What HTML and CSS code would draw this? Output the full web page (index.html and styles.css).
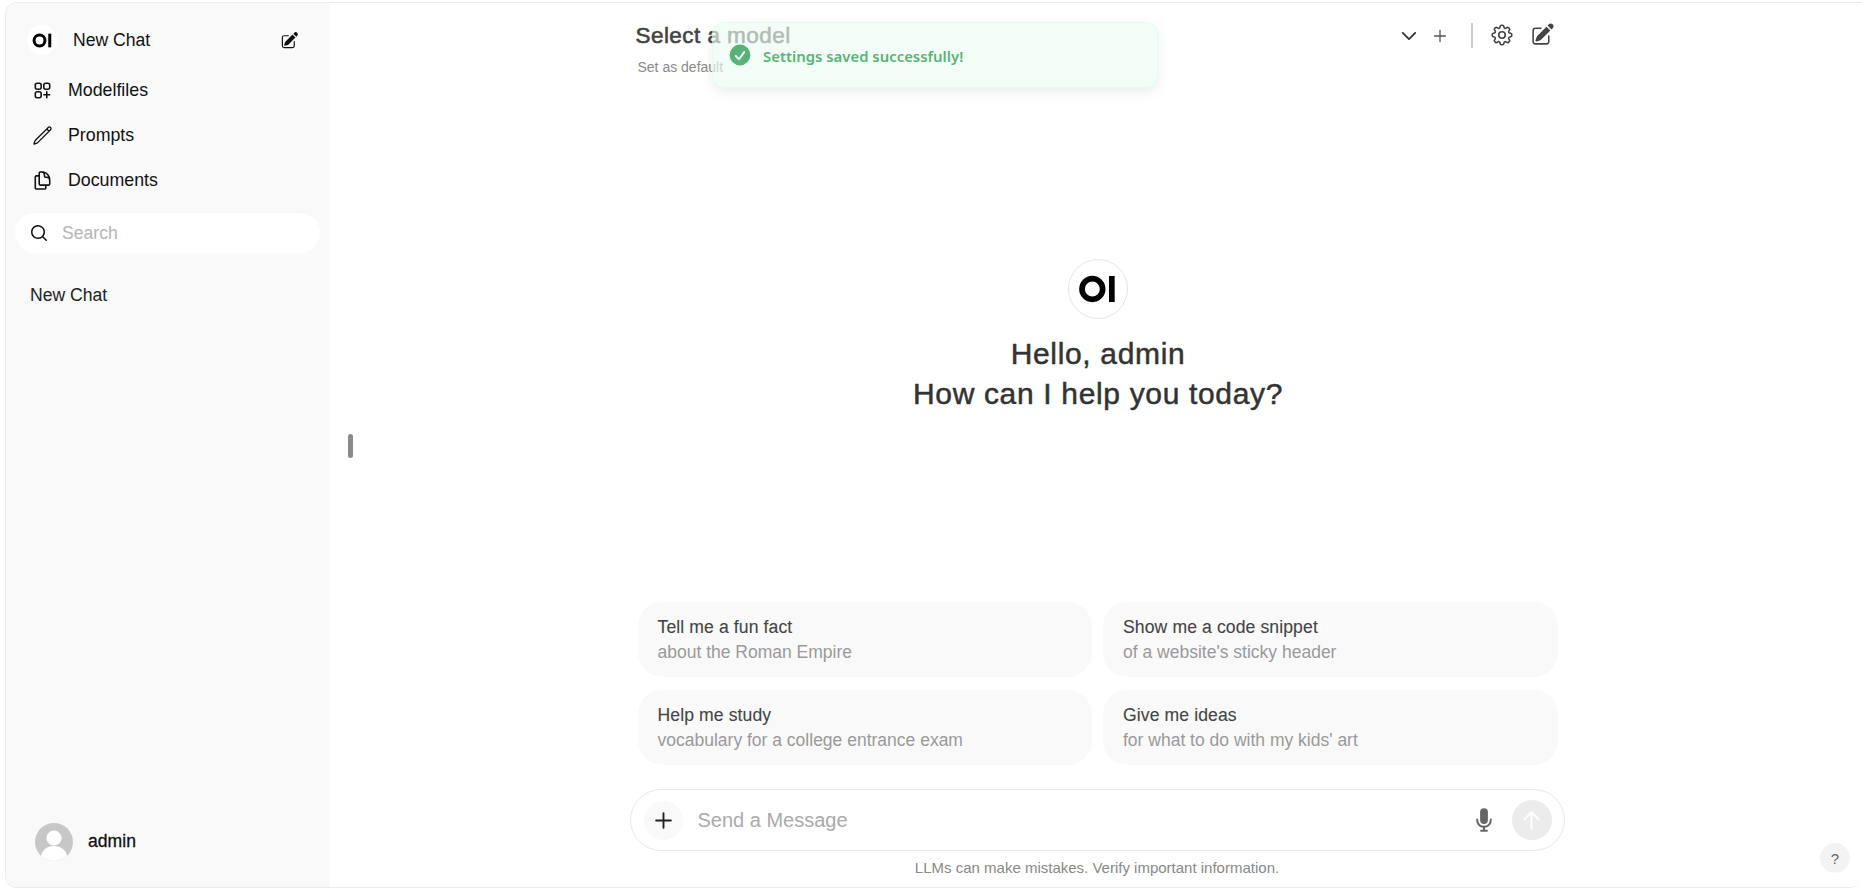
FILE: index.html
```html
<!DOCTYPE html>
<html lang="en">
<head>
<meta charset="utf-8">
<title>Open WebUI</title>
<link rel="stylesheet" href="styles.css">
</head>
<body>
<div class="frame">
  <aside class="sidebar">
    <div class="new-chat">
      <span class="logo-small">
        <svg viewBox="0 0 24 24" width="21" height="21"><circle cx="8.6" cy="12" r="6.2" fill="none" stroke="#000" stroke-width="3.4"/><rect x="18.6" y="4.2" width="3.4" height="15.6" fill="#000"/></svg>
      </span>
      <span class="new-chat-label">New Chat</span>
      <svg class="new-chat-icon" viewBox="0 0 24 24" fill="#111"><path d="M21.731 2.269a2.625 2.625 0 0 0-3.712 0l-1.157 1.157 3.712 3.712 1.157-1.157a2.625 2.625 0 0 0 0-3.712ZM19.513 8.199l-3.712-3.712-8.4 8.4a5.25 5.25 0 0 0-1.32 2.214l-.8 2.685a.75.75 0 0 0 .933.933l2.685-.8a5.25 5.25 0 0 0 2.214-1.32l8.4-8.4Z"/><path d="M5.25 5.25a3 3 0 0 0-3 3v10.5a3 3 0 0 0 3 3h10.5a3 3 0 0 0 3-3V13.5a.75.75 0 0 0-1.5 0v5.25a1.5 1.5 0 0 1-1.5 1.5H5.25a1.5 1.5 0 0 1-1.5-1.5V8.25a1.5 1.5 0 0 1 1.5-1.5h5.25a.75.75 0 0 0 0-1.5H5.25Z"/></svg>
    </div>
    <nav class="nav">
      <a class="nav-item">
        <svg class="nav-icon" viewBox="0 0 24 24" fill="none" stroke="#111" stroke-width="1.8" stroke-linecap="round" stroke-linejoin="round"><path d="M13.5 16.875h3.375m0 0h3.375m-3.375 0V13.5m0 3.375v3.375M6 10.5h2.25a2.25 2.25 0 0 0 2.25-2.25V6a2.25 2.25 0 0 0-2.25-2.25H6A2.25 2.25 0 0 0 3.75 6v2.25A2.25 2.25 0 0 0 6 10.5Zm0 9.75h2.25A2.25 2.25 0 0 0 10.5 18v-2.25a2.25 2.25 0 0 0-2.25-2.25H6a2.25 2.25 0 0 0-2.25 2.25V18A2.25 2.25 0 0 0 6 20.25Zm9.75-9.75H18a2.25 2.25 0 0 0 2.25-2.25V6A2.25 2.25 0 0 0 18 3.75h-2.25A2.25 2.25 0 0 0 13.5 6v2.25a2.25 2.25 0 0 0 2.25 2.25Z"/></svg>
        <span>Modelfiles</span>
      </a>
      <a class="nav-item">
        <svg class="nav-icon" viewBox="0 0 24 24" fill="none" stroke="#111" stroke-width="1.5" stroke-linecap="round" stroke-linejoin="round"><path d="m16.862 4.487 1.687-1.688a1.875 1.875 0 1 1 2.652 2.652L6.832 19.82a4.5 4.5 0 0 1-1.897 1.13l-2.685.8.8-2.685a4.5 4.5 0 0 1 1.13-1.897L16.863 4.487Zm0 0L19.5 7.125"/></svg>
        <span>Prompts</span>
      </a>
      <a class="nav-item">
        <svg class="nav-icon" viewBox="0 0 24 24" fill="none" stroke="#111" stroke-width="1.8" stroke-linecap="round" stroke-linejoin="round"><path d="M15.75 17.25v3.375c0 .621-.504 1.125-1.125 1.125h-9.75a1.125 1.125 0 0 1-1.125-1.125V7.875c0-.621.504-1.125 1.125-1.125H6.75a9.06 9.06 0 0 1 1.5.124m7.5 10.376h3.375c.621 0 1.125-.504 1.125-1.125V11.25c0-4.46-3.243-8.161-7.5-8.876a9.06 9.06 0 0 0-1.5-.124H9.375c-.621 0-1.125.504-1.125 1.125v3.5m7.5 10.375H9.375a1.125 1.125 0 0 1-1.125-1.125v-9.25m12 6.625v-1.875a3.375 3.375 0 0 0-3.375-3.375h-1.5a1.125 1.125 0 0 1-1.125-1.125v-1.5a3.375 3.375 0 0 0-3.375-3.375H9.75"/></svg>
        <span>Documents</span>
      </a>
    </nav>
    <div class="search">
      <svg class="search-icon" viewBox="0 0 20 20" fill="#111"><path fill-rule="evenodd" clip-rule="evenodd" d="M9 3.5a5.5 5.5 0 1 0 0 11 5.5 5.5 0 0 0 0-11ZM2 9a7 7 0 1 1 12.452 4.391l3.328 3.329a.75.75 0 1 1-1.06 1.06l-3.329-3.328A7 7 0 0 1 2 9Z"/></svg>
      <span class="search-text">Search</span>
    </div>
    <div class="chat-link">New Chat</div>
    <div class="user">
      <svg class="avatar" viewBox="0 0 38 38"><defs><clipPath id="ac"><circle cx="19" cy="19" r="19"/></clipPath></defs><g clip-path="url(#ac)"><rect width="38" height="38" fill="#c7c7c7"/><circle cx="19" cy="15" r="7.6" fill="#fff"/><ellipse cx="19" cy="34" rx="13" ry="11" fill="#fff"/></g></svg>
      <span class="user-name">admin</span>
    </div>
  </aside>

  <main class="main">
    <div class="column">
      <header class="header">
        <div class="header-left">
          <div class="model-title">Select a model</div>
          <div class="model-default">Set as default</div>
        </div>
        <div class="header-right">
          <svg class="hdr-chevron" viewBox="0 0 24 24" fill="none" stroke="#333" stroke-width="2.2" stroke-linecap="round" stroke-linejoin="round"><path d="m4.5 8.25 7.5 7.5 7.5-7.5"/></svg>
          <svg class="hdr-plus" viewBox="0 0 16 16" fill="none" stroke="#555" stroke-width="1.3" stroke-linecap="round"><path d="M8 2.5v11M2.5 8h11"/></svg>
          <span class="hdr-sep"></span>
          <svg class="hdr-cog" viewBox="0 0 24 24" fill="none" stroke="#444" stroke-width="1.5" stroke-linecap="round" stroke-linejoin="round"><path d="M10.343 3.94c.09-.542.56-.94 1.11-.94h1.093c.55 0 1.02.398 1.11.94l.149.894c.07.424.384.764.78.93.398.164.855.142 1.205-.108l.737-.527a1.125 1.125 0 0 1 1.45.12l.773.774c.39.389.44 1.002.12 1.45l-.527.737c-.25.35-.272.806-.107 1.204.165.397.505.71.93.78l.893.15c.543.09.94.559.94 1.109v1.094c0 .55-.397 1.02-.94 1.11l-.894.149c-.424.07-.764.383-.929.78-.165.398-.143.854.107 1.204l.527.738c.32.447.269 1.06-.12 1.45l-.774.773a1.125 1.125 0 0 1-1.449.12l-.738-.527c-.35-.25-.806-.272-1.203-.107-.398.165-.71.505-.781.929l-.149.894c-.09.542-.56.94-1.11.94h-1.094c-.55 0-1.019-.398-1.11-.94l-.148-.894c-.071-.424-.384-.764-.781-.93-.398-.164-.854-.142-1.204.108l-.738.527c-.447.32-1.06.269-1.45-.12l-.773-.774a1.125 1.125 0 0 1-.12-1.45l.527-.737c.25-.35.272-.806.108-1.204-.165-.397-.506-.71-.93-.78l-.894-.15c-.542-.09-.94-.56-.94-1.109v-1.094c0-.55.398-1.02.94-1.11l.894-.149c.424-.07.765-.383.93-.78.165-.398.143-.854-.108-1.204l-.526-.738a1.125 1.125 0 0 1 .12-1.45l.773-.773a1.125 1.125 0 0 1 1.45-.12l.737.527c.35.25.807.272 1.204.107.397-.165.71-.505.78-.929l.15-.894Z"/><path d="M15 12a3 3 0 1 1-6 0 3 3 0 0 1 6 0Z"/></svg>
          <svg class="hdr-edit" viewBox="0 0 24 24" fill="#444"><path d="M21.731 2.269a2.625 2.625 0 0 0-3.712 0l-1.157 1.157 3.712 3.712 1.157-1.157a2.625 2.625 0 0 0 0-3.712ZM19.513 8.199l-3.712-3.712-8.4 8.4a5.25 5.25 0 0 0-1.32 2.214l-.8 2.685a.75.75 0 0 0 .933.933l2.685-.8a5.25 5.25 0 0 0 2.214-1.32l8.4-8.4Z"/><path d="M5.25 5.25a3 3 0 0 0-3 3v10.5a3 3 0 0 0 3 3h10.5a3 3 0 0 0 3-3V13.5a.75.75 0 0 0-1.5 0v5.25a1.5 1.5 0 0 1-1.5 1.5H5.25a1.5 1.5 0 0 1-1.5-1.5V8.25a1.5 1.5 0 0 1 1.5-1.5h5.25a.75.75 0 0 0 0-1.5H5.25Z"/></svg>
        </div>
      </header>

      <section class="welcome">
        <span class="logo-big">
          <svg viewBox="0 0 24 24" width="40" height="40"><circle cx="8.6" cy="12" r="6.2" fill="none" stroke="#000" stroke-width="3.4"/><rect x="18.6" y="4.2" width="3.4" height="15.6" fill="#000"/></svg>
        </span>
        <h1 class="greeting">Hello, admin<br>How can I help you today?</h1>
      </section>

      <section class="suggestions">
        <div class="card"><div class="card-title">Tell me a fun fact</div><div class="card-sub">about the Roman Empire</div></div>
        <div class="card"><div class="card-title">Show me a code snippet</div><div class="card-sub">of a website's sticky header</div></div>
        <div class="card"><div class="card-title">Help me study</div><div class="card-sub">vocabulary for a college entrance exam</div></div>
        <div class="card"><div class="card-title">Give me ideas</div><div class="card-sub">for what to do with my kids' art</div></div>
      </section>

      <div class="composer">
        <span class="plus-btn">
          <svg viewBox="0 0 16 16" width="19" height="19" fill="none" stroke="#222" stroke-width="1.6" stroke-linecap="round"><path d="M8 1.8v12.4M1.8 8h12.4"/></svg>
        </span>
        <span class="composer-text">Send a Message</span>
        <svg class="mic" viewBox="0 0 20 20" fill="#666"><path d="M7 4a3 3 0 0 1 6 0v6a3 3 0 1 1-6 0V4Z"/><path d="M5.5 9.643a.75.75 0 0 0-1.5 0V10c0 3.06 2.29 5.585 5.25 5.954V17.5h-1.5a.75.75 0 0 0 0 1.5h4.5a.75.75 0 0 0 0-1.5h-1.5v-1.546A6.001 6.001 0 0 0 16 10v-.357a.75.75 0 0 0-1.5 0V10a4.5 4.5 0 0 1-9 0v-.357Z"/></svg>
        <span class="send-btn">
          <svg viewBox="0 0 20 20" width="27" height="27" fill="#fff"><path fill-rule="evenodd" d="M10 17a.75.75 0 0 1-.75-.75V5.612L5.29 9.77a.75.75 0 0 1-1.08-1.04l5.25-5.5a.75.75 0 0 1 1.08 0l5.25 5.5a.75.75 0 1 1-1.08 1.04l-3.96-4.158V16.25A.75.75 0 0 1 10 17Z"/></svg>
        </span>
      </div>
      <div class="disclaimer">LLMs can make mistakes. Verify important information.</div>
    </div>
    <span class="drag-handle"></span>
    <span class="help">?</span>
  </main>

  <div class="toast">
    <svg class="toast-icon" viewBox="0 0 20 20" fill="#008a2e"><path fill-rule="evenodd" clip-rule="evenodd" d="M10 18a8 8 0 1 0 0-16 8 8 0 0 0 0 16Zm3.857-9.809a.75.75 0 0 0-1.214-.882l-3.483 4.79-1.88-1.88a.75.75 0 1 0-1.06 1.061l2.5 2.5a.75.75 0 0 0 1.137-.089l4-5.5Z"/></svg>
    <span class="toast-text">Settings saved successfully!</span>
  </div>
</div>
</body>
</html>
```
FILE: styles.css
```css
* { box-sizing: border-box; }
html, body { margin: 0; height: 100%; overflow: hidden; background: #fff; }
body {
  padding: 2px 0 0 5px;
  font-family: "Liberation Sans", Arial, sans-serif;
  color: #111;
}
.frame {
  position: relative;
  display: flex;
  height: 886px;
  border-top: 1px solid #ececec;
  border-left: 1px solid #ececec;
  border-bottom: 1px solid #ececec;
  border-radius: 12px 0 12px 12px;
  overflow: hidden;
}
.sidebar {
  width: 324px;
  flex: none;
  display: flex;
  flex-direction: column;
  background: #f9f9f9;
  padding: 22px 0 0 0;
}
.new-chat {
  display: flex;
  align-items: center;
  padding: 0 31px 0 21px;
  height: 30px;
}
.logo-small {
  width: 30px;
  height: 30px;
  border-radius: 50%;
  background: #fff;
  display: flex;
  align-items: center;
  justify-content: center;
}
.new-chat-label { margin-left: 16px; font-size: 17.6px; flex: 1; }
.new-chat-icon { width: 19px; height: 19px; }
.nav { margin-top: 13px; display: flex; flex-direction: column; }
.nav-item {
  display: flex;
  align-items: center;
  height: 45px;
  padding-left: 26px;
  font-size: 17.8px;
}
.nav-icon { width: 21px; height: 21px; margin-right: 15px; }
.search {
  display: flex;
  align-items: center;
  height: 40px;
  margin: 10px 10px 0 9px;
  padding-left: 14px;
  background: #fff;
  border-radius: 20px;
}
.search-icon { width: 20px; height: 20px; }
.search-text { margin-left: 13px; font-size: 17.6px; color: #b4b4b4; }
.chat-link { margin: 31px 0 0 24px; font-size: 17.6px; color: #222; line-height: 22px; }
.user {
  margin-top: auto;
  margin-bottom: 26px;
  display: flex;
  align-items: center;
  padding-left: 29px;
}
.avatar { width: 38px; height: 38px; }
.user-name {
  margin: 0 0 2px 15px;
  font-size: 17.6px;
  -webkit-text-stroke: .3px #111;
}

.main {
  flex: 1;
  position: relative;
  background: #fff;
  display: flex;
  justify-content: center;
  min-width: 0;
}
.column {
  width: 935px;
  margin-left: 2px;
  padding-bottom: 9px;
  display: flex;
  flex-direction: column;
}
.header {
  display: flex;
  justify-content: space-between;
  height: 256px;
  padding: 20px 10px 0 6px;
}
.model-title {
  font-size: 22.5px;
  color: #444;
  line-height: 26px;
  letter-spacing: .45px;
  -webkit-text-stroke: .6px #444;
}
.model-default { margin: 10px 0 0 2px; font-size: 14px; color: #888; line-height: 16px; }
.header-right { display: flex; align-items: flex-start; margin-top: -2px; }
.hdr-chevron { width: 20px; height: 20px; margin-top: 5px; }
.hdr-plus { width: 16px; height: 16px; margin: 7px 0 0 12.5px; }
.hdr-sep { width: 2px; height: 25px; margin: 2px 0 0 23px; background: #ccc; }
.hdr-cog { width: 26px; height: 26px; margin: 1px 0 0 16px; }
.hdr-edit { width: 25px; height: 25px; margin: 1px 0 0 15px; }

.welcome { display: flex; flex-direction: column; align-items: center; margin-left: 2px; }
.logo-big {
  width: 60px;
  height: 60px;
  border-radius: 50%;
  border: 1px solid #e5e5e5;
  background: #fff;
  display: flex;
  align-items: center;
  justify-content: center;
}
.greeting {
  margin: 15px 0 0;
  text-align: center;
  font-size: 30px;
  font-weight: 400;
  line-height: 40px;
  letter-spacing: .66px;
  -webkit-text-stroke: .5px #333;
  color: #333;
}
.suggestions {
  margin: auto 7px 0 8px;
  display: grid;
  grid-template-columns: 1fr 1fr;
  gap: 13px 11px;
}
.card {
  height: 75px;
  padding: 12.6px 20px 0;
  background: #f9f9f9;
  border-radius: 24px;
}
.card-title { font-size: 17.6px; line-height: 25px; color: #444; letter-spacing: .1px; -webkit-text-stroke: .1px #444; }
.card-sub { font-size: 17.5px; line-height: 25px; color: #999; }
.composer {
  margin-top: 24px;
  height: 62px;
  display: flex;
  align-items: center;
  border: 1px solid #e8e8e8;
  border-radius: 31px;
  padding: 0 12px 0 13px;
}
.plus-btn {
  width: 39px;
  height: 39px;
  border-radius: 50%;
  background: #f9f9f9;
  display: flex;
  align-items: center;
  justify-content: center;
}
.composer-text { margin-left: 15px; flex: 1; font-size: 20px; color: #aaa; }
.mic { width: 26px; height: 26px; margin-right: 15px; }
.send-btn {
  width: 40px;
  height: 40px;
  border-radius: 50%;
  background: #ececec;
  display: flex;
  align-items: center;
  justify-content: center;
}
.disclaimer {
  margin-top: 7px;
  text-align: center;
  font-size: 15px;
  line-height: 20px;
  color: #888;
}
.drag-handle {
  position: absolute;
  left: 18px;
  top: 431px;
  width: 5px;
  height: 24px;
  border-radius: 3px;
  background: #8a8a8a;
}
.help {
  position: absolute;
  right: 12px;
  bottom: 14px;
  width: 30px;
  height: 30px;
  border-radius: 50%;
  background: #f3f3f3;
  display: flex;
  align-items: center;
  justify-content: center;
  font-size: 15px;
  color: #666;
}
.toast {
  position: absolute;
  left: 706px;
  top: 19px;
  width: 446px;
  height: 66px;
  display: flex;
  align-items: center;
  padding: 0 24px 0 14px;
  background: #ecfdf3;
  border: 1px solid #d3fde5;
  border-radius: 12px;
  box-shadow: 0 4px 12px rgba(0, 0, 0, .1);
  opacity: .65;
}
.toast-icon { width: 26px; height: 26px; flex: none; }
.toast-text {
  margin-left: 10px;
  padding-top: 1px;
  font-family: "Noto Sans", sans-serif;
  font-size: 14.9px;
  font-weight: 600;
  color: #008a2e;
}
```
